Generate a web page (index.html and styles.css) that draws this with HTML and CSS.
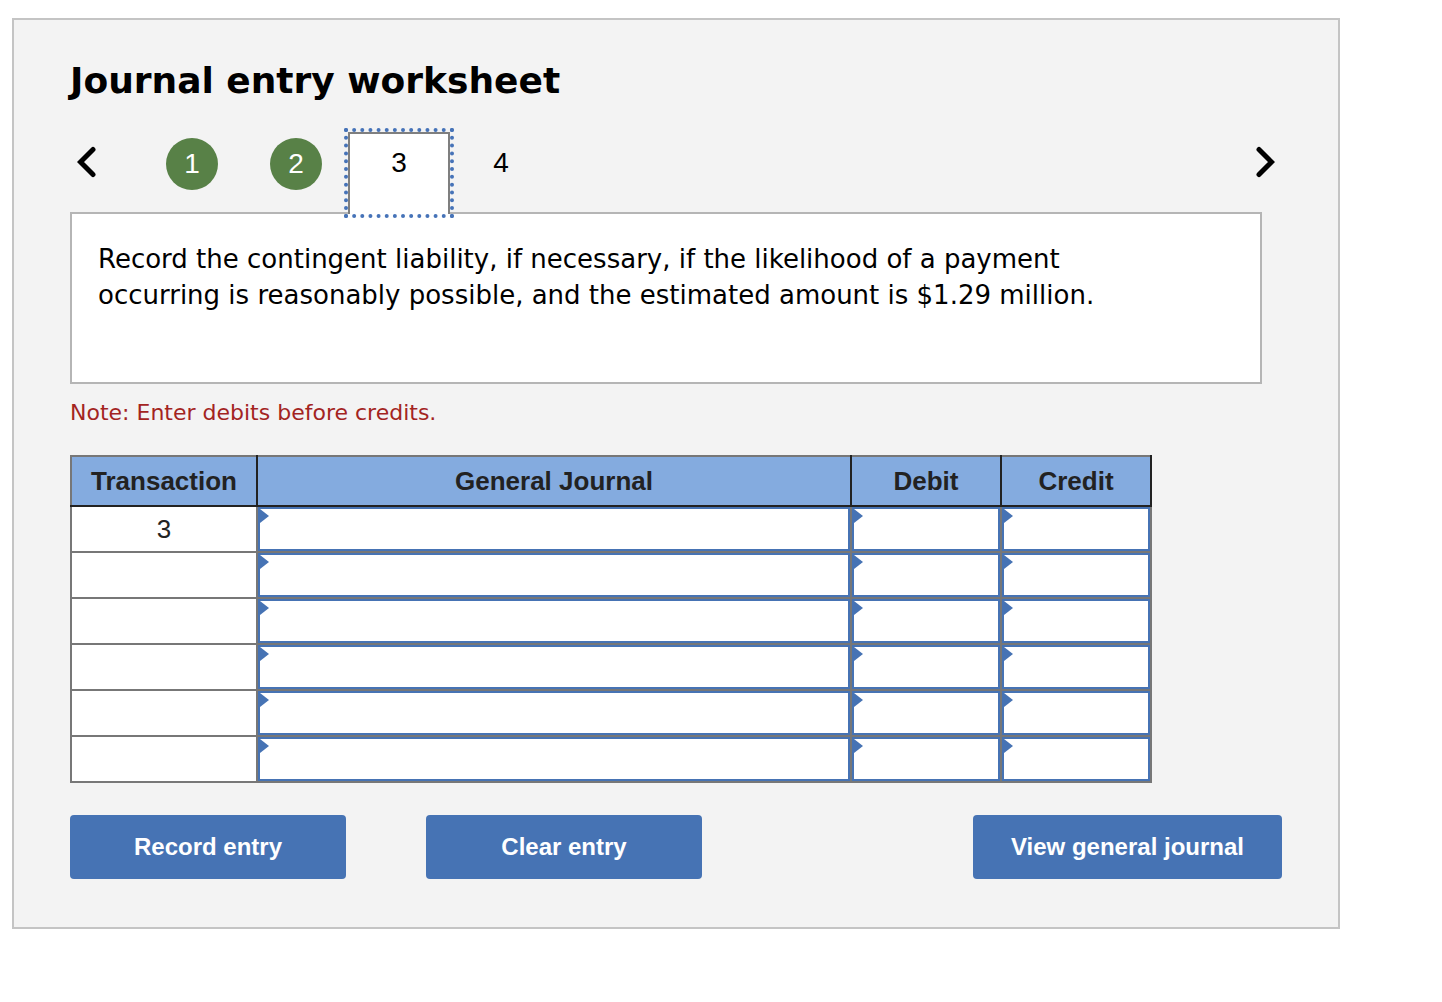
FILE: index.html
```html
<!DOCTYPE html>
<html lang="en">
<head>
  <meta charset="utf-8">
  <title>Journal entry worksheet</title>
  <link rel="stylesheet" href="styles.css">
</head>
<body>
  <main class="worksheet">
    <h1>Journal entry worksheet</h1>

    <nav class="steps">
      <button type="button" class="arrow" aria-label="Previous">
        <svg width="20" height="32" viewBox="0 0 20 32"><path d="M16 3.5 L3.5 16 L16 28.5"/></svg>
      </button>
      <div class="tabs">
        <button type="button" class="tab done"><span>1</span></button>
        <button type="button" class="tab done"><span>2</span></button>
        <button type="button" class="tab active"><span>3</span></button>
        <button type="button" class="tab"><span>4</span></button>
      </div>
      <button type="button" class="arrow" aria-label="Next">
        <svg width="20" height="32" viewBox="0 0 20 32"><path d="M4 3.5 L16.5 16 L4 28.5"/></svg>
      </button>
    </nav>

    <div class="instructions">
      <p>Record the contingent liability, if necessary, if the likelihood of a payment occurring is reasonably possible, and the estimated amount is $1.29 million.</p>
    </div>

    <p class="note">Note: Enter debits before credits.</p>

    <table class="journal">
      <colgroup>
        <col class="col-transaction">
        <col>
        <col class="col-amount">
        <col class="col-amount">
      </colgroup>
      <thead>
        <tr>
          <th>Transaction</th>
          <th>General Journal</th>
          <th>Debit</th>
          <th>Credit</th>
        </tr>
      </thead>
      <tbody>
        <tr>
          <td>3</td>
          <td><div class="entry"><input type="text" aria-label="General Journal, row 1"></div></td>
          <td><div class="entry"><input type="text" aria-label="Debit, row 1"></div></td>
          <td><div class="entry"><input type="text" aria-label="Credit, row 1"></div></td>
        </tr>
        <tr>
          <td></td>
          <td><div class="entry"><input type="text" aria-label="General Journal, row 2"></div></td>
          <td><div class="entry"><input type="text" aria-label="Debit, row 2"></div></td>
          <td><div class="entry"><input type="text" aria-label="Credit, row 2"></div></td>
        </tr>
        <tr>
          <td></td>
          <td><div class="entry"><input type="text" aria-label="General Journal, row 3"></div></td>
          <td><div class="entry"><input type="text" aria-label="Debit, row 3"></div></td>
          <td><div class="entry"><input type="text" aria-label="Credit, row 3"></div></td>
        </tr>
        <tr>
          <td></td>
          <td><div class="entry"><input type="text" aria-label="General Journal, row 4"></div></td>
          <td><div class="entry"><input type="text" aria-label="Debit, row 4"></div></td>
          <td><div class="entry"><input type="text" aria-label="Credit, row 4"></div></td>
        </tr>
        <tr>
          <td></td>
          <td><div class="entry"><input type="text" aria-label="General Journal, row 5"></div></td>
          <td><div class="entry"><input type="text" aria-label="Debit, row 5"></div></td>
          <td><div class="entry"><input type="text" aria-label="Credit, row 5"></div></td>
        </tr>
        <tr>
          <td></td>
          <td><div class="entry"><input type="text" aria-label="General Journal, row 6"></div></td>
          <td><div class="entry"><input type="text" aria-label="Debit, row 6"></div></td>
          <td><div class="entry"><input type="text" aria-label="Credit, row 6"></div></td>
        </tr>
      </tbody>
    </table>

    <div class="actions">
      <button type="button" class="btn">Record entry</button>
      <button type="button" class="btn">Clear entry</button>
      <button type="button" class="btn btn-view">View general journal</button>
    </div>
  </main>
</body>
</html>
```

FILE: styles.css
```css
* {
  box-sizing: border-box;
}
body {
  margin: 0;
  padding: 18px 102px 18px 12px;
  background: #fff;
  color: #000;
  font-family: Verdana, "DejaVu Sans", sans-serif;
}
.worksheet {
  padding: 37px 56px 48px;
  border: 2px solid #c4c4c4;
  background: #f3f3f3;
}
h1 {
  margin: 0;
  font-size: 36px;
  line-height: 48px;
}
button {
  margin: 0;
  padding: 0;
  border: none;
  background: none;
  font-family: Arial, "Liberation Sans", sans-serif;
  cursor: pointer;
}

/* step navigation */
.steps {
  display: flex;
  align-items: flex-start;
  margin-top: 27px;
  padding: 0 7px;
}
.arrow {
  height: 60px;
}
.arrow svg {
  display: block;
  fill: none;
  stroke: #000;
  stroke-width: 5;
  stroke-linecap: round;
}
.tabs {
  display: flex;
  flex: 1;
  padding-left: 43px;
}
.tab {
  position: relative;
  width: 102px;
  height: 82px;
  padding-bottom: 20px;
  color: #000;
  font-size: 28px;
}
.tab.done {
  width: 104px;
  padding-bottom: 18px;
}
.tab.done span {
  display: block;
  width: 52px;
  margin: 0 auto;
  border-radius: 50%;
  background: #588147;
  color: #fff;
  line-height: 52px;
}
.tab.active {
  padding-bottom: 22px;
  border: 2px solid #7f7f7f;
  border-bottom: none;
  background: #fff;
  outline: 4px dotted #4673b8;
}

.instructions {
  min-height: 172px;
  margin: -2px 20px 0 0;
  padding: 27px 80px 26px 26px;
  border: 2px solid #b5b5b5;
  background: #fff;
}
.instructions p {
  margin: 0;
  font-size: 26px;
  line-height: 36px;
}
.note {
  margin: 14px 0 28px;
  color: #a3241f;
  font-size: 22px;
  line-height: 29px;
}

/* journal table */
.journal {
  width: 100%;
  max-width: 1082px;
  border-collapse: collapse;
  table-layout: fixed;
  color: #222;
  font-family: Arial, "Liberation Sans", sans-serif;
  font-size: 26px;
}
.col-transaction {
  width: 186px;
}
.col-amount {
  width: 150px;
}
.journal th {
  height: 50px;
  padding: 0;
  border: 2px solid #222;
  border-top-color: #777;
  background: #84abdf;
}
.journal th:first-child {
  border-left-color: #777;
}
.journal td {
  height: 46px;
  padding: 0;
  border: 2px solid #777;
  background: #fff;
  text-align: center;
}
.entry {
  position: relative;
}
.entry::before {
  content: "";
  position: absolute;
  top: 2px;
  left: 2px;
  border: solid transparent;
  border-width: 7px 0 7px 9px;
  border-left-color: #4673b4;
}
.entry input {
  display: block;
  width: 100%;
  height: 44px;
  padding: 0 16px;
  border: 2px solid #4673b4;
  border-radius: 0;
  background: #fff;
  font: inherit;
}

.actions {
  display: flex;
  gap: 80px;
  margin-top: 32px;
}
.btn {
  width: 276px;
  height: 64px;
  border-radius: 4px;
  background: #4673b4;
  color: #fff;
  font-size: 24px;
  font-weight: bold;
}
.btn-view {
  width: 309px;
  margin-left: auto;
}
```
